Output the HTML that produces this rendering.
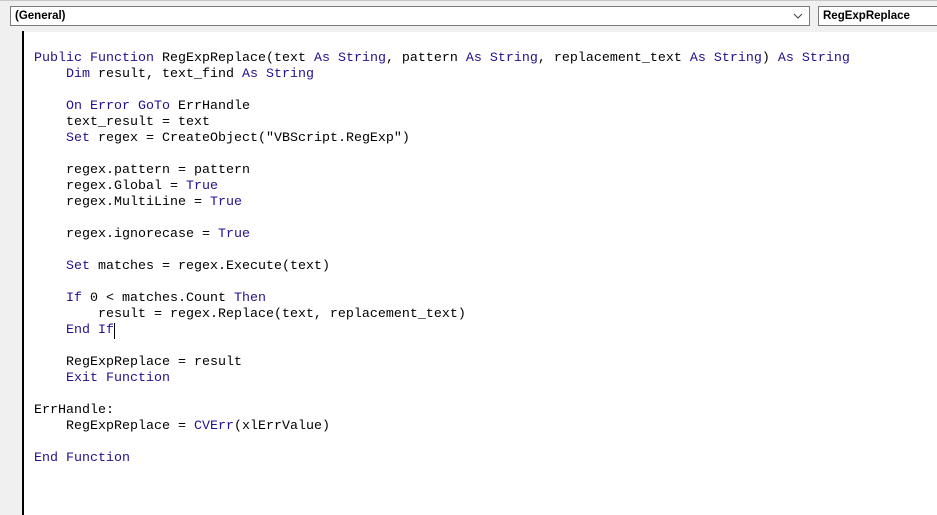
<!DOCTYPE html>
<html><head><style>
body{margin:0;width:937px;height:515px;overflow:hidden;background:#fff;position:relative;font-family:"Liberation Sans",sans-serif}
.bar{position:absolute;left:0;top:0;width:937px;height:31px;background:#f0f0f0;border-top:1px solid #c8c8c8}
.cb{position:absolute;top:5px;height:20px;background:#fff;border:1px solid #7a7a7a;box-sizing:border-box;font-size:11.5px;font-weight:bold;line-height:18px;padding-left:4px;color:#000}
.gut{position:absolute;left:0;top:31px;width:22px;height:484px;background:#f0f0f0;border-right:2px solid #000}
pre{position:absolute;left:34px;top:51px;margin:0;font-family:"Liberation Mono",monospace;font-size:13.33px;line-height:16px;color:#000}
.k{color:#20128c}
.cur{display:inline-block;width:1px;height:16px;background:#000;vertical-align:top}
</style></head><body>
<div class="bar">
<div class="cb" style="left:10px;width:800px">(General)<svg style="position:absolute;right:6px;top:6px" width="10" height="6"><path d="M1 1L5 5L9 1" fill="none" stroke="#444"/></svg></div>
<div class="cb" style="left:818px;width:125px">RegExpReplace</div>
</div>
<div class="gut"></div>
<pre><span class="k">Public Function</span> RegExpReplace(text <span class="k">As String</span>, pattern <span class="k">As String</span>, replacement_text <span class="k">As String</span>) <span class="k">As String</span>
    <span class="k">Dim</span> result, text_find <span class="k">As String</span>

    <span class="k">On Error GoTo</span> ErrHandle
    text_result = text
    <span class="k">Set</span> regex = CreateObject("VBScript.RegExp")

    regex.pattern = pattern
    regex.Global = <span class="k">True</span>
    regex.MultiLine = <span class="k">True</span>

    regex.ignorecase = <span class="k">True</span>

    <span class="k">Set</span> matches = regex.Execute(text)

    <span class="k">If</span> 0 &lt; matches.Count <span class="k">Then</span>
        result = regex.Replace(text, replacement_text)
    <span class="k">End If</span><span class="cur"></span>

    RegExpReplace = result
    <span class="k">Exit Function</span>

ErrHandle:
    RegExpReplace = <span class="k">CVErr</span>(xlErrValue)

<span class="k">End Function</span>
</pre>
</body></html>
